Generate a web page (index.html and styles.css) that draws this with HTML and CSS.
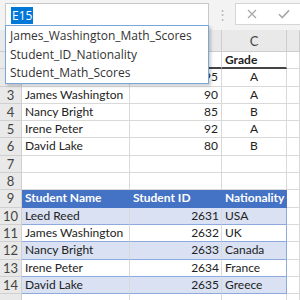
FILE: index.html
```html
<!DOCTYPE html>
<html>
<head>
  <meta charset="UTF-8" />
  <title>Name Box</title>
  <link rel="stylesheet" href="styles.css">
</head>
<body>

  <!-- formula bar: name box, grip, cancel / enter -->
  <div class="topbar">
    <div class="namebox"><span class="sel">E15</span></div>
    <div class="grip">&#8942;</div>
    <div class="fxbtns">
      <svg width="10" height="10" viewBox="0 0 10 10"><path d="M1 1L9 9M9 1L1 9" stroke="#a8a8a8" stroke-width="1.3" fill="none"/></svg>
      <svg width="12" height="10" viewBox="0 0 12 10"><path d="M1 5.3L4.3 8.6L11 1.4" stroke="#a8a8a8" stroke-width="1.6" fill="none"/></svg>
    </div>
  </div>

  <!-- named ranges dropdown -->
  <div class="names-list">
    <div>James_Washington_Math_Scores</div>
    <div>Student_ID_Nationality</div>
    <div>Student_Math_Scores</div>
  </div>

  <div class="sheet">
    <div class="row colhead"><div class="rh"></div><div>A</div><div>B</div><div>C</div><div></div></div>

    <div class="row t1-head"><div class="rh">1</div><div>Student Name</div><div class="ctr">Math Score</div><div>Grade</div><div></div></div>
    <div class="row"><div class="rh">2</div><div>Leed Reed</div><div class="num">95</div><div class="ctr">A</div><div></div></div>
    <div class="row"><div class="rh">3</div><div>James Washington</div><div class="num">90</div><div class="ctr">A</div><div></div></div>
    <div class="row"><div class="rh">4</div><div>Nancy Bright</div><div class="num">85</div><div class="ctr">B</div><div></div></div>
    <div class="row"><div class="rh">5</div><div>Irene Peter</div><div class="num">92</div><div class="ctr">A</div><div></div></div>
    <div class="row"><div class="rh">6</div><div>David Lake</div><div class="num">80</div><div class="ctr">B</div><div></div></div>
    <div class="row"><div class="rh">7</div><div></div><div></div><div></div><div></div></div>
    <div class="row"><div class="rh">8</div><div></div><div></div><div></div><div></div></div>

    <div class="row t2-head"><div class="rh">9</div><div>Student Name</div><div>Student ID</div><div>Nationality</div><div></div></div>
    <div class="row t2 band"><div class="rh">10</div><div>Leed Reed</div><div class="num">2631</div><div>USA</div><div></div></div>
    <div class="row t2"><div class="rh">11</div><div>James Washington</div><div class="num">2632</div><div>UK</div><div></div></div>
    <div class="row t2 band"><div class="rh">12</div><div>Nancy Bright</div><div class="num">2633</div><div>Canada</div><div></div></div>
    <div class="row t2"><div class="rh">13</div><div>Irene Peter</div><div class="num">2634</div><div>France</div><div></div></div>
    <div class="row t2 band"><div class="rh">14</div><div>David Lake</div><div class="num">2635</div><div>Greece</div><div></div></div>
    <div class="row"><div class="rh"></div><div></div><div></div><div></div><div></div></div>
  </div>

</body>
</html>
```

FILE: styles.css
```css
body {
  margin: 0;
  width: 300px;
  height: 300px;
  overflow: hidden;
  position: relative;
  background: #fff;
  font-family: Lato, "Liberation Sans", sans-serif;
  font-size: 12px;
  color: #222;
}

/* formula bar */
.topbar {
  display: flex;
  align-items: flex-start;
  height: 30px;
  box-sizing: border-box;
  padding: 3px 0 0 5px;
  background: #f3f3f3;
}
.namebox {
  width: 204px;
  height: 22px;
  box-sizing: border-box;
  background: #fff;
  border: 1px solid #c8c8c8;
  border-bottom: none;
  padding: 5px 0 0 5px;
  font-family: "Open Sans", sans-serif;
  font-size: 12px;
  line-height: 13px;
}
.sel {
  background: #0078d7;
  color: #fff;
  padding: 0 1px;
}
.grip {
  width: 26px;
  text-align: center;
  color: #b8b8b8;
  font-size: 13px;
  line-height: 22px;
}
.fxbtns {
  flex: 1;
  height: 22px;
  box-sizing: border-box;
  background: #fff;
  border: 1px solid #d6d6d6;
  border-right: none;
  display: flex;
  align-items: center;
  gap: 21px;
  padding-left: 11px;
}

/* named range list */
.names-list {
  position: absolute;
  left: 5px;
  top: 25px;
  width: 204px;
  height: 59px;
  box-sizing: border-box;
  border: 1px solid #7aa7d9;
  background: #fff;
  box-shadow: 2px 2px 3px rgba(0, 0, 0, 0.2);
  padding-top: 1px;
  font-family: "Open Sans", sans-serif;
  font-size: 12px;
  color: #333;
}
.names-list div {
  height: 18.5px;
  line-height: 18.5px;
  padding-left: 4px;
}

/* grid */
.row {
  display: grid;
  grid-template-columns: 22px 108px 92px 65px 1fr;
  height: 17.3px;
}
.row > div {
  border-right: 1px solid #d9d9d9;
  border-bottom: 1px solid #d9d9d9;
  padding: 0 3px;
  white-space: nowrap;
  overflow: hidden;
  line-height: 16px;
}
.row > .rh {
  background: #e9e9e9;
  border-color: #d0d0d0;
  color: #444;
  font-size: 13px;
  text-align: center;
  padding: 0;
}
.colhead {
  height: 22px;
}
.colhead > div {
  background: #e9e9e9;
  border-color: #cdcdcd !important;
  color: #444;
  font-size: 13px;
  text-align: center;
  line-height: 22px !important;
}
.num {
  text-align: right;
}
.ctr {
  text-align: center;
}

/* first table */
.t1-head > div:nth-child(n+2):nth-child(-n+4) {
  font-weight: bold;
  border-bottom: 2px solid #444;
}

/* second table */
.t2-head > div:nth-child(n+2):nth-child(-n+4) {
  background: #4472c4;
  color: #fff;
  font-weight: bold;
  border-color: #4472c4;
}
.t2 > div:nth-child(n+2):nth-child(-n+4) {
  border-bottom-color: #8ea9db;
}
.t2 > div:nth-child(4),
.t2-head > div:nth-child(4) {
  border-right-color: #8ea9db;
}
.band > div:nth-child(n+2):nth-child(-n+4) {
  background: #d9e1f2;
}
.t2 > div.num {
  padding-right: 2px;
}
```
